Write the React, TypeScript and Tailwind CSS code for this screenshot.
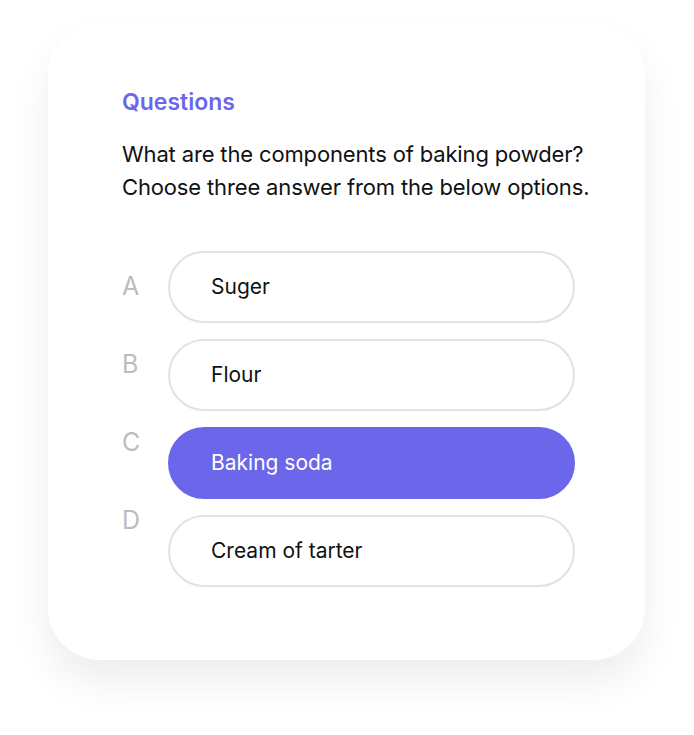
const OPTIONS = [
  { key: "A", label: "Suger", selected: false },
  { key: "B", label: "Flour", selected: false },
  { key: "C", label: "Baking soda", selected: true },
  { key: "D", label: "Cream of tarter", selected: false },
];

export default function App() {
  return (
    <div className="min-h-[735px] w-[694px] bg-white pt-[24px] pl-[48px] font-['Inter',sans-serif]">
      <div className="w-[597px] h-[636px] rounded-[52px] bg-white shadow-[0_22px_40px_rgba(0,0,0,0.07)] pt-[64px] pl-[74px] pr-[70px]">
        <h1 className="text-[23px] leading-[28px] font-semibold text-[#6c66ee]">Questions</h1>
        <p className="mt-[22px] whitespace-nowrap text-[22px] leading-[33px] text-[#111] tracking-[-0.15px]">
          What are the components of baking powder?
          <br />
          Choose three answer from the below options.
        </p>
        <div className="mt-[47px] flex">
          <div className="w-[46px] flex flex-col gap-[46px] pt-[19px]">
            {OPTIONS.map((o) => (
              <span key={o.key} className="text-[25px] leading-[32px] text-[#bcbcbc]">
                {o.key}
              </span>
            ))}
          </div>
          <div className="flex-1 flex flex-col gap-[16px]">
            {OPTIONS.map((o) =>
              o.selected ? (
                <div
                  key={o.key}
                  className="h-[72px] rounded-full bg-[#6b66ea] border-2 border-[#6b66ea] flex items-center pl-[41px] text-[21px] text-white"
                >
                  {o.label}
                </div>
              ) : (
                <div
                  key={o.key}
                  className="h-[72px] rounded-full bg-white border-2 border-[#e2e2e2] flex items-center pl-[41px] text-[21px] text-[#111]"
                >
                  {o.label}
                </div>
              )
            )}
          </div>
        </div>
      </div>
    </div>
  );
}
